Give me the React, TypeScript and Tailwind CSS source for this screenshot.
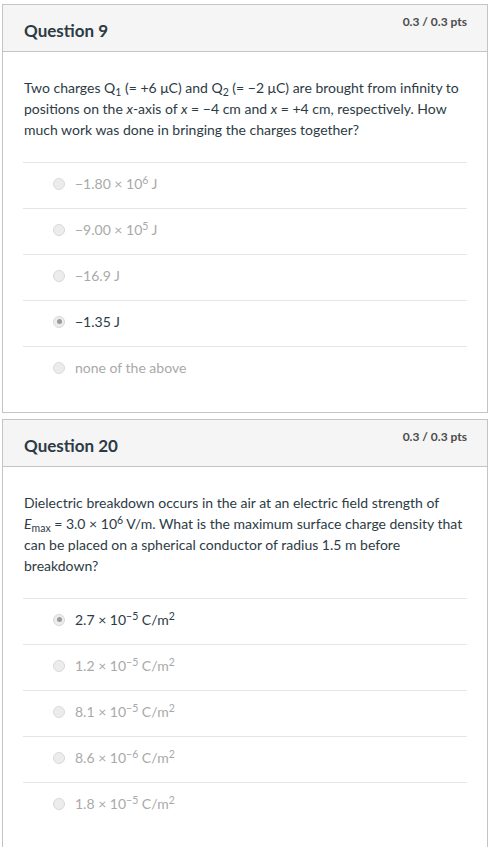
import type { ReactNode } from "react";

type Option = { label: ReactNode; selected?: boolean };

function Radio({ selected }: { selected?: boolean }) {
  return (
    <span className="flex h-[12px] w-[12px] shrink-0 items-center justify-center rounded-full border border-[#d9d9d9] bg-[#ececec]">
      {selected && <span className="h-[5px] w-[5px] rounded-full bg-[#9a9a9a]" />}
    </span>
  );
}

function QuestionCard({
  title,
  text,
  options,
  className = "",
}: {
  title: string;
  text: ReactNode;
  options: Option[];
  className?: string;
}) {
  return (
    <section className={`ml-[2px] w-[486px] border border-[#c4c4c4] bg-white ${className}`}>
      <header className="flex h-[47px] items-start justify-between border-b border-[#c4c4c4] bg-[#f5f5f5] pl-[21px] pr-[20px]">
        <h2 className="pt-[14px] text-[17px] font-bold leading-[24px] text-[#2d3b45]">{title}</h2>
        <span className="pt-[9px] text-[12px] font-bold leading-[16px] text-[#4b4b4b]">0.3 / 0.3 pts</span>
      </header>
      <div className="px-5 pb-5 pt-[25px]">
        <p className="mb-[22px] px-px text-[14px] leading-[21px] text-[#2d3b45]">{text}</p>
        <ul>
          {options.map((o, i) => (
            <li key={i} className="flex h-[46px] items-center gap-[10px] border-t border-[#e6e6e6] pb-[4px] pl-[30px]">
              <Radio selected={o.selected} />
              <span className={`text-[14px] ${o.selected ? "text-[#2d3b45]" : "text-[#a9a9a9]"}`}>{o.label}</span>
            </li>
          ))}
        </ul>
      </div>
    </section>
  );
}

const x = <i>x</i>;

export default function App() {
  return (
    <div className="min-h-screen bg-white pt-1 font-['Lato','Open_Sans',sans-serif]">
      <QuestionCard
        title="Question 9"
        text={
          <>
            Two charges Q<sub>1</sub> (= +6 μC) and Q<sub>2</sub> (= −2 μC) are brought from infinity to positions on the {x}-axis of {x} = −4 cm and {x} = +4 cm, respectively. How much work was done in bringing the charges together?
          </>
        }
        options={[
          { label: <>−1.80 × 10<sup>6</sup> J</> },
          { label: <>−9.00 × 10<sup>5</sup> J</> },
          { label: <>−16.9 J</> },
          { label: <>−1.35 J</>, selected: true },
          { label: <>none of the above</> },
        ]}
      />
      <QuestionCard
        className="mt-[6px]"
        title="Question 20"
        text={
          <>
            Dielectric breakdown occurs in the air at an electric field strength of <i>E</i>
            <sub>max</sub> = 3.0 × 10<sup>6</sup> V/m. What is the maximum surface charge density that can be placed on a spherical conductor of radius 1.5 m before breakdown?
          </>
        }
        options={[
          { label: <>2.7 × 10<sup>−5</sup> C/m<sup>2</sup></>, selected: true },
          { label: <>1.2 × 10<sup>−5</sup> C/m<sup>2</sup></> },
          { label: <>8.1 × 10<sup>−5</sup> C/m<sup>2</sup></> },
          { label: <>8.6 × 10<sup>−6</sup> C/m<sup>2</sup></> },
          { label: <>1.8 × 10<sup>−5</sup> C/m<sup>2</sup></> },
        ]}
      />
    </div>
  );
}
